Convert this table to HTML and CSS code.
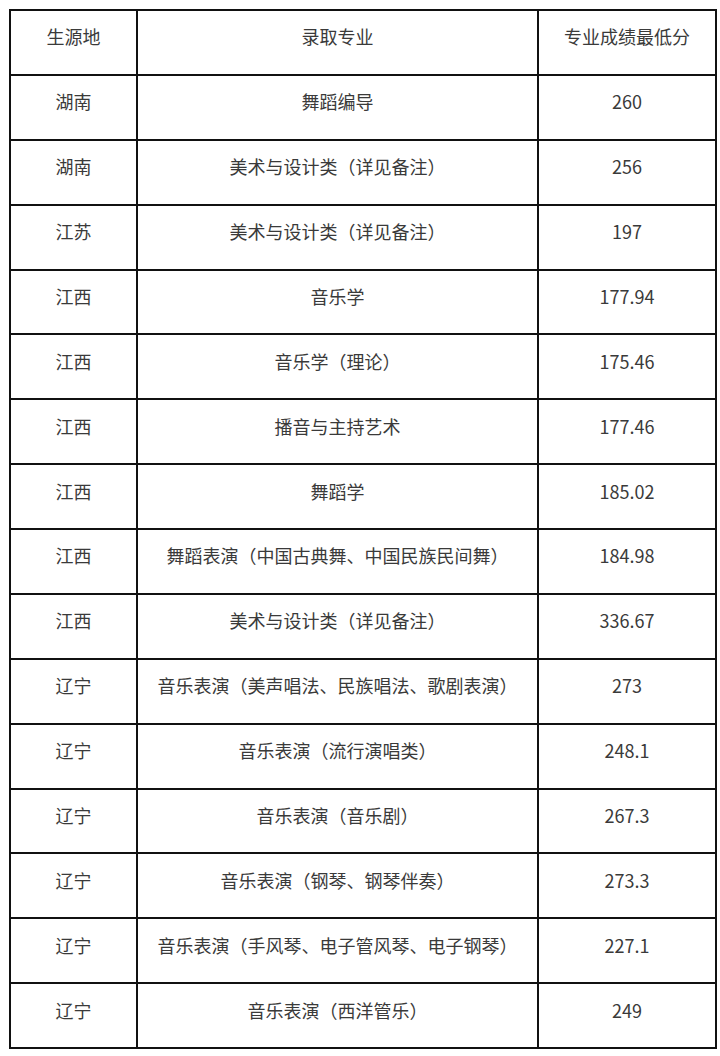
FILE: index.html
```html
<!DOCTYPE html>
<html lang="zh-CN">
<head>
<meta charset="utf-8">
<title>录取专业成绩</title>
<link rel="stylesheet" href="styles.css">
</head>
<body>
<table class="score-table">
  <colgroup>
    <col class="col-region">
    <col class="col-major">
    <col class="col-score">
  </colgroup>
  <thead>
    <tr><th>生源地</th><th>录取专业</th><th>专业成绩最低分</th></tr>
  </thead>
  <tbody>
    <tr><td>湖南</td><td>舞蹈编导</td><td>260</td></tr>
    <tr><td>湖南</td><td>美术与设计类（详见备注）</td><td>256</td></tr>
    <tr><td>江苏</td><td>美术与设计类（详见备注）</td><td>197</td></tr>
    <tr><td>江西</td><td>音乐学</td><td>177.94</td></tr>
    <tr><td>江西</td><td>音乐学（理论）</td><td>175.46</td></tr>
    <tr><td>江西</td><td>播音与主持艺术</td><td>177.46</td></tr>
    <tr><td>江西</td><td>舞蹈学</td><td>185.02</td></tr>
    <tr><td>江西</td><td>舞蹈表演（中国古典舞、中国民族民间舞）</td><td>184.98</td></tr>
    <tr><td>江西</td><td>美术与设计类（详见备注）</td><td>336.67</td></tr>
    <tr><td>辽宁</td><td>音乐表演（美声唱法、民族唱法、歌剧表演）</td><td>273</td></tr>
    <tr><td>辽宁</td><td>音乐表演（流行演唱类）</td><td>248.1</td></tr>
    <tr><td>辽宁</td><td>音乐表演（音乐剧）</td><td>267.3</td></tr>
    <tr><td>辽宁</td><td>音乐表演（钢琴、钢琴伴奏）</td><td>273.3</td></tr>
    <tr><td>辽宁</td><td>音乐表演（手风琴、电子管风琴、电子钢琴）</td><td>227.1</td></tr>
    <tr><td>辽宁</td><td>音乐表演（西洋管乐）</td><td>249</td></tr>
  </tbody>
</table>
</body>
</html>
```
FILE: styles.css
```css
html, body {
  margin: 0;
  padding: 0;
  background: #ffffff;
}

body {
  padding: 9px 0 0 9px;
  font-family: "Noto Sans CJK SC", "Liberation Sans", sans-serif;
  color: #3a3a3a;
}

.score-table {
  border-collapse: collapse;
  table-layout: fixed;
  width: 706px;
}

.col-region { width: 127px; }
.col-major { width: 401px; }
.col-score { width: 178px; }

.score-table th,
.score-table td {
  border: 2px solid #111111;
  height: 64.88px;
  box-sizing: border-box;
  padding: 0 0 12px 0;
  text-align: center;
  vertical-align: middle;
  font-size: 18px;
  font-weight: 400;
  line-height: 22px;
  white-space: nowrap;
}
```
